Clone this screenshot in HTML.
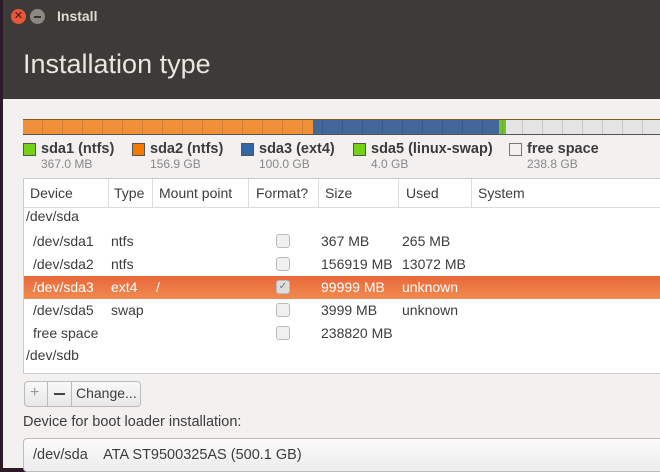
<!DOCTYPE html><html><head><style>
body{margin:0;width:660px;height:468px;overflow:hidden;background:#2c1a28;font-family:"Liberation Sans",sans-serif;position:relative}
.a{position:absolute}
.win{left:3px;top:0;width:657px;height:468px;background:#f2f1f0}
.hd{left:3px;top:0;width:657px;height:99px;background:#3c3b37}
.t{font-size:14px;color:#3c3c3c;white-space:nowrap}
.sw{width:11px;height:11px;border:1px solid #555}
.cb{width:12px;height:12px;border:1px solid #bbb;border-radius:3px;background:#f0f0f0}
</style></head><body>
<div class="a win"></div>
<div class="a hd"></div>
<div class="a" style="left:11px;top:9px;width:15px;height:15px;border-radius:50%;background:#e9573a;color:#3a1a10;font-size:11px;text-align:center;line-height:15px">✕</div>
<div class="a" style="left:30px;top:9px;width:15px;height:15px;border-radius:50%;background:#8a8984;"><div class="a" style="left:4px;top:7px;width:7px;height:2px;background:#333"></div></div>
<div class="a t" style="left:57px;top:8px;color:#dfdbd2;font-weight:bold;font-size:14px">Install</div>
<div class="a t" style="left:23px;top:49px;color:#e8e6e1;font-size:27px">Installation type</div>
<div class="a" style="left:23px;top:119px;width:637px;height:14px;background:repeating-linear-gradient(90deg,transparent 0 19px,rgba(0,0,0,.12) 19px 20px),linear-gradient(90deg,#f0913a 0 290px,#41679b 290px 476px,#73c42a 476px 483px,#e4e4e4 483px);border-top:1px solid #8a5a20;border-bottom:1px solid #555"></div>
<div class="a sw" style="left:23px;top:143px;background:#73d216"></div>
<div class="a t" style="left:41px;top:141px;font-weight:bold;font-size:14.5px">sda1 (ntfs)</div><div class="a t" style="left:41px;top:157px;font-size:12px;color:#888">367.0 MB</div>
<div class="a sw" style="left:132px;top:143px;background:#f57900"></div>
<div class="a t" style="left:150px;top:141px;font-weight:bold;font-size:14.5px">sda2 (ntfs)</div><div class="a t" style="left:150px;top:157px;font-size:12px;color:#888">156.9 GB</div>
<div class="a sw" style="left:241px;top:143px;background:#3465a4"></div>
<div class="a t" style="left:259px;top:141px;font-weight:bold;font-size:14.5px">sda3 (ext4)</div><div class="a t" style="left:259px;top:157px;font-size:12px;color:#888">100.0 GB</div>
<div class="a sw" style="left:353px;top:143px;background:#73d216"></div>
<div class="a t" style="left:371px;top:141px;font-weight:bold;font-size:14.5px">sda5 (linux-swap)</div><div class="a t" style="left:371px;top:157px;font-size:12px;color:#888">4.0 GB</div>
<div class="a sw" style="left:509px;top:143px;background:#f2f1f0;border-color:#777"></div>
<div class="a t" style="left:527px;top:141px;font-weight:bold;font-size:14.5px">free space</div><div class="a t" style="left:527px;top:157px;font-size:12px;color:#888">238.8 GB</div>
<div class="a" style="left:23px;top:178px;width:640px;height:194px;background:#fff;border:1px solid #ccc"></div>
<div class="a" style="left:24px;top:207px;width:636px;height:1px;background:#ddd"></div>
<div class="a" style="left:108px;top:179px;width:1px;height:28px;background:#ddd"></div>
<div class="a" style="left:152px;top:179px;width:1px;height:28px;background:#ddd"></div>
<div class="a" style="left:248px;top:179px;width:1px;height:28px;background:#ddd"></div>
<div class="a" style="left:318px;top:179px;width:1px;height:28px;background:#ddd"></div>
<div class="a" style="left:398px;top:179px;width:1px;height:28px;background:#ddd"></div>
<div class="a" style="left:471px;top:179px;width:1px;height:28px;background:#ddd"></div>
<div class="a t" style="left:30px;top:185px">Device</div><div class="a t" style="left:114px;top:185px">Type</div><div class="a t" style="left:159px;top:185px">Mount point</div><div class="a t" style="left:256px;top:185px">Format?</div><div class="a t" style="left:325px;top:185px">Size</div><div class="a t" style="left:406px;top:185px">Used</div><div class="a t" style="left:478px;top:185px">System</div>
<div class="a" style="left:24px;top:276px;width:636px;height:23px;background:linear-gradient(#e9683a,#f08a50)"></div>
<div class="a t" style="left:26px;top:208px">/dev/sda</div>
<div class="a t" style="left:33px;top:233px">/dev/sda1</div><div class="a t" style="left:111px;top:233px">ntfs</div><div class="a cb" style="left:276px;top:234px"></div><div class="a t" style="left:321px;top:233px">367 MB</div><div class="a t" style="left:402px;top:233px">265 MB</div>
<div class="a t" style="left:33px;top:256px">/dev/sda2</div><div class="a t" style="left:111px;top:256px">ntfs</div><div class="a cb" style="left:276px;top:257px"></div><div class="a t" style="left:321px;top:256px">156919 MB</div><div class="a t" style="left:402px;top:256px">13072 MB</div>
<div class="a t" style="left:33px;top:279px;color:#fff">/dev/sda3</div><div class="a t" style="left:111px;top:279px;color:#fff">ext4</div><div class="a t" style="left:156px;top:279px;color:#fff">/</div><div class="a cb" style="left:276px;top:280px;background:#ddd;font-size:10px;line-height:12px;text-align:center;color:#777">✓</div><div class="a t" style="left:321px;top:279px;color:#fff">99999 MB</div><div class="a t" style="left:402px;top:279px;color:#fff">unknown</div>
<div class="a t" style="left:33px;top:302px">/dev/sda5</div><div class="a t" style="left:111px;top:302px">swap</div><div class="a cb" style="left:276px;top:303px"></div><div class="a t" style="left:321px;top:302px">3999 MB</div><div class="a t" style="left:402px;top:302px">unknown</div>
<div class="a t" style="left:33px;top:325px">free space</div><div class="a cb" style="left:276px;top:326px"></div><div class="a t" style="left:321px;top:325px">238820 MB</div>
<div class="a t" style="left:26px;top:347px">/dev/sdb</div>
<div class="a" style="left:24px;top:381px;width:115px;height:24px;border:1px solid #bbb;border-radius:4px;background:linear-gradient(#f8f8f8,#e8e8e8)"></div>
<div class="a" style="left:47px;top:381px;width:1px;height:26px;background:#bbb"></div>
<div class="a" style="left:71px;top:381px;width:1px;height:26px;background:#bbb"></div>
<div class="a t" style="left:30px;top:384px;color:#999;font-size:16px">+</div>
<div class="a" style="left:54px;top:393px;width:11px;height:2px;background:#444"></div>
<div class="a t" style="left:76px;top:385px">Change...</div>
<div class="a t" style="left:23px;top:414px;font-size:14.5px">Device for boot loader installation:</div>
<div class="a" style="left:23px;top:438px;width:640px;height:32px;border:1px solid #bbb;border-radius:4px;background:linear-gradient(#fbfbfb,#ececec)"></div>
<div class="a t" style="left:33px;top:447px;font-size:14.5px">/dev/sda&nbsp;&nbsp;&nbsp; ATA ST9500325AS (500.1 GB)</div>
</body></html>
